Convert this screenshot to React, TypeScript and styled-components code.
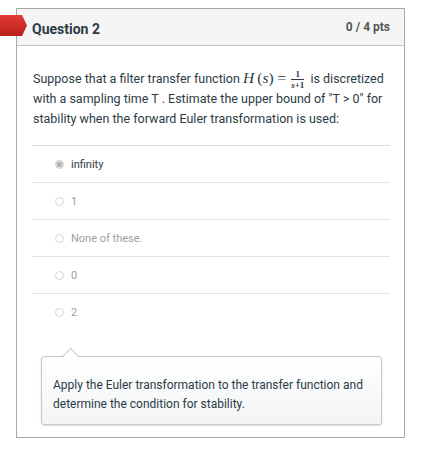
import React from "react";
import styled, { createGlobalStyle } from "styled-components";

const Global = createGlobalStyle`
  html, body { margin: 0; padding: 0; background: #fff; }
  body { font-family: Roboto, "Liberation Sans", Arial, sans-serif; }
`;

const Page = styled.div`
  padding: 8px 24px 0 16px;
  position: relative;
`;

const Flag = styled.div`
  position: absolute;
  left: 0;
  top: 15px;
  width: 27px;
  height: 21px;
  background: linear-gradient(#e23b34, #b8201c);
  clip-path: polygon(0 0, 22px 0, 27px 50%, 22px 100%, 0 100%);
`;

const Card = styled.div`
  width: 387px;
  border: 1px solid #a9a9a9;
  background: #fff;
`;

const Header = styled.div`
  display: flex;
  justify-content: space-between;
  align-items: flex-start;
  background: #f5f5f5;
  border-bottom: 1px solid #c4c4c4;
  height: 37px;
  padding: 0 14px 0 15px;
  box-sizing: border-box;
`;

const Title = styled.div`
  font-size: 14px;
  font-weight: 700;
  color: #2d3b45;
  margin-top: 12px;
`;

const Points = styled.div`
  font-size: 12px;
  font-weight: 700;
  color: #555;
  margin-top: 11px;
`;

const Body = styled.div`
  padding: 22px 14px 12px 15px;
`;

const Text = styled.div`
  font-size: 12.5px;
  line-height: 20px;
  color: #2d3b45;
  padding: 0 1px;
`;

const MathI = styled.span`
  font-family: "Liberation Serif", "Times New Roman", serif;
  font-style: italic;
  font-size: 15.5px;
`;

const MathR = styled.span`
  font-family: "Liberation Serif", "Times New Roman", serif;
  font-size: 15.5px;
`;

const Frac = styled.span`
  display: inline-block;
  vertical-align: middle;
  text-align: center;
  font-family: "Liberation Serif", "Times New Roman", serif;
  font-size: 9px;
  line-height: 8px;
  margin: 0 3px 0 5px;
`;

const Num = styled.span`
  display: block;
  font-weight: 700;
  border-bottom: 1px solid #2d3b45;
  padding: 0 1px 1px;
`;

const Den = styled.span`
  display: block;
  font-weight: 700;
  padding-top: 1px;
  i { font-style: italic; }
`;

const Answers = styled.div`
  margin-top: 16px;
  border-top: 1px solid #dcdcdc;
`;

const Row = styled.div<{ $last?: boolean }>`
  display: flex;
  align-items: center;
  height: 36px;
  padding-left: 23px;
  border-bottom: ${(p) => (p.$last ? "none" : "1px solid #e4e4e4")};
`;

const Radio = styled.span<{ $selected?: boolean }>`
  width: 9px;
  height: 9px;
  border-radius: 50%;
  box-sizing: border-box;
  border: 1px solid ${(p) => (p.$selected ? "#c8c8c8" : "#d6d6d6")};
  background: ${(p) =>
    p.$selected ? "radial-gradient(circle, #b5b5b5 0 2.6px, #e6e6e6 3px)" : "#fff"};
  margin-right: 7px;
  flex-shrink: 0;
`;

const Label = styled.span<{ $selected?: boolean }>`
  font-size: 11px;
  color: ${(p) => (p.$selected ? "#2d3b45" : "#a0a0a0")};
`;

const Tip = styled.div`
  position: relative;
  margin: 26px 8px 0 9px;
  border: 1px solid #c3c9cf;
  border-radius: 3px;
  background: linear-gradient(#ffffff, #f2f4f6);
  box-shadow: 0 1px 2px rgba(0, 0, 0, 0.15);
  padding: 19px 8px 10px 11px;
  font-size: 12px;
  line-height: 19px;
  color: #2d3b45;

  &::before {
    content: "";
    position: absolute;
    left: 23px;
    top: -7px;
    width: 10px;
    height: 10px;
    background: #fff;
    border-left: 1px solid #c3c9cf;
    border-top: 1px solid #c3c9cf;
    transform: rotate(45deg);
  }
`;

const questionOptions = [
  { label: "infinity", selected: true },
  { label: "1" },
  { label: "None of these." },
  { label: "0" },
  { label: "2" },
];

export default function App() {
  return (
    <>
      <Global />
      <Page>
        <Flag />
        <Card>
          <Header>
            <Title>Question 2</Title>
            <Points>0 / 4 pts</Points>
          </Header>
          <Body>
            <Text>
              Suppose that a filter transfer function <MathI>H</MathI>{" "}
              <MathR>(</MathR>
              <MathI>s</MathI>
              <MathR>) =</MathR>
              <Frac>
                <Num>1</Num>
                <Den>
                  <i>s</i>+1
                </Den>
              </Frac>{" "}
              is discretized with a sampling time T . Estimate the upper bound of "T &gt; 0" for
              stability when the forward Euler transformation is used:
            </Text>
            <Answers>
              {questionOptions.map((o, i) => (
                <Row key={i} $last={i === questionOptions.length - 1}>
                  <Radio $selected={o.selected} />
                  <Label $selected={o.selected}>{o.label}</Label>
                </Row>
              ))}
            </Answers>
            <Tip>
              Apply the Euler transformation to the transfer function and determine the condition
              for stability.
            </Tip>
          </Body>
        </Card>
      </Page>
    </>
  );
}
